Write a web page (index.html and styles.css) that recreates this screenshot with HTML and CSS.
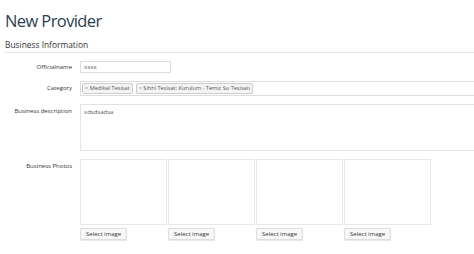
FILE: index.html
```html
<!DOCTYPE html>
<html lang="en">
<head>
    <meta charset="UTF-8">
    <title>New Provider</title>
    <link rel="stylesheet" href="styles.css">
</head>
<body>
    <div class="page">
        <h1 class="title">New Provider</h1>
        <h3 class="section">Business Information</h3>

        <form class="form">
            <div class="row">
                <label class="label">Officialname</label>
                <input class="input input-short" type="text" value="xxxx">
            </div>

            <div class="row">
                <label class="label label-tags">Category</label>
                <div class="input tags">
                    <span class="tag"><span class="tag-x">×</span> Medikal Tesisat</span>
                    <span class="tag"><span class="tag-x">×</span> Sıhhi Tesisat: Kurulum - Temiz Su Tesisatı</span>
                </div>
            </div>

            <div class="row">
                <label class="label label-top">Business description</label>
                <textarea class="input textarea">xdsdsadsa</textarea>
            </div>

            <div class="row">
                <label class="label label-top">Business Photos</label>
                <div class="photos">
                    <div class="photo">
                        <div class="photo-box"></div>
                        <button type="button" class="select-btn">Select image</button>
                    </div>
                    <div class="photo">
                        <div class="photo-box"></div>
                        <button type="button" class="select-btn">Select image</button>
                    </div>
                    <div class="photo">
                        <div class="photo-box"></div>
                        <button type="button" class="select-btn">Select image</button>
                    </div>
                    <div class="photo">
                        <div class="photo-box"></div>
                        <button type="button" class="select-btn">Select image</button>
                    </div>
                </div>
            </div>
        </form>
    </div>
</body>
</html>
```

FILE: styles.css
```css
body {
    margin: 0;
    font-family: "Open Sans", sans-serif;
    background: #fff;
    color: #333;
}
.page {
    padding: 8px 0 0 5px;
    overflow: hidden;
}
.title {
    margin: 0;
    font-size: 16.5px;
    font-weight: 400;
    letter-spacing: -0.6px;
    color: #2c3e50;
    line-height: 26px;
}
.section {
    margin: 5px 0 0;
    font-size: 8.4px;
    font-weight: 400;
    color: #333;
    line-height: 11px;
    padding-bottom: 2px;
    border-bottom: 1px solid #e8e8e8;
}
.form {
    margin-top: 8px;
}
.row {
    display: flex;
    align-items: flex-start;
    gap: 8px;
    margin-bottom: 8px;
}
.label {
    width: 67px;
    flex: none;
    text-align: right;
    font-size: 6px;
    line-height: 12px;
    color: #333;
}
.label-tags {
    line-height: 15px;
}
.label-top {
    padding-top: 1px;
}
.input {
    box-sizing: border-box;
    border: 1px solid #ddd;
    font-family: inherit;
    font-size: 6px;
    color: #555;
    background: #fff;
    margin: 0;
    padding: 0 3px;
}
.input-short {
    width: 91px;
    height: 12px;
}
.tags {
    flex: none;
    width: 420px;
    height: 15px;
    display: flex;
    align-items: center;
    gap: 3px;
    padding: 0 1px;
}
.tag {
    border: 1px solid #ccc;
    border-radius: 2px;
    background: #f4f4f4;
    padding: 0 2px;
    font-size: 5.6px;
    line-height: 9px;
    white-space: nowrap;
}
.tag-x {
    color: #999;
}
.textarea {
    flex: none;
    width: 420px;
    height: 47px;
    resize: none;
    padding: 3px 3px;
    border-color: #e2e2e2;
}
.photos {
    display: flex;
    gap: 1px;
}
.photo {
    width: 87px;
    display: flex;
    flex-direction: column;
    align-items: flex-start;
}
.photo-box {
    width: 100%;
    height: 66px;
    border: 1px solid #e8e8e8;
    box-sizing: border-box;
}
.select-btn {
    margin-top: 3px;
    height: 12px;
    padding: 0 5px;
    font-family: inherit;
    font-size: 6px;
    color: #333;
    background: #f7f7f7;
    border: 1px solid #ddd;
    border-radius: 2px;
    box-shadow: 0 1px 1px rgba(0,0,0,0.1);
}
```
